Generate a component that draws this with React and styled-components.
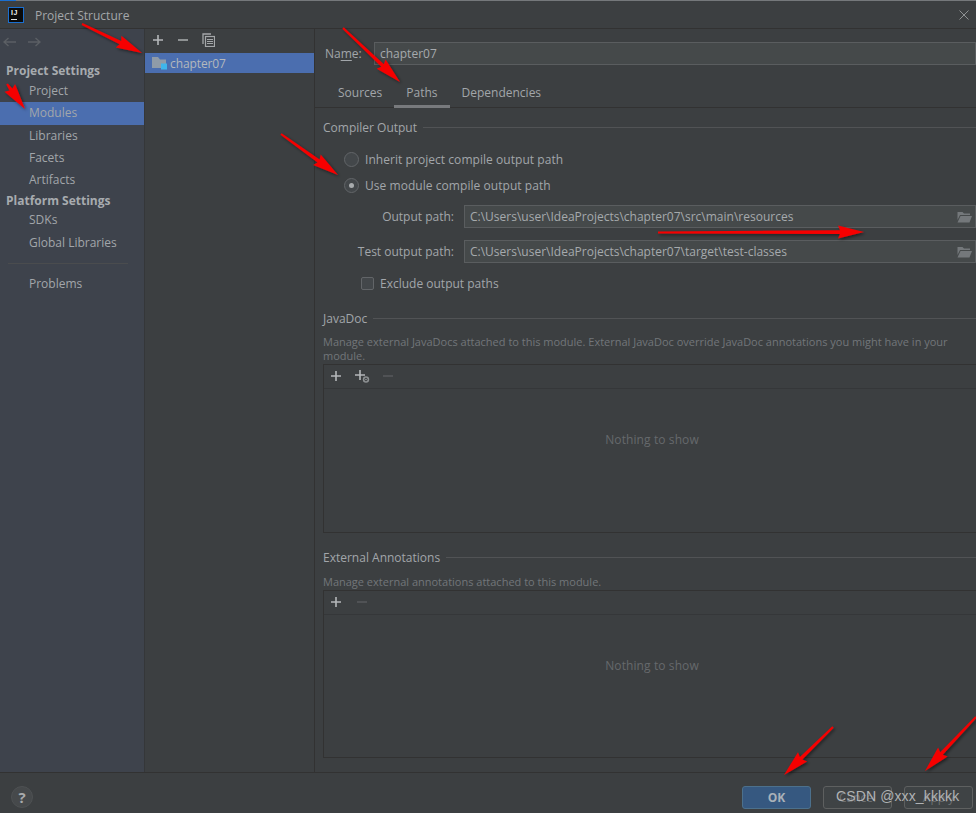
import React from 'react';
import styled, { createGlobalStyle } from 'styled-components';

const GlobalStyle = createGlobalStyle`
  html, body {
    margin: 0;
    padding: 0;
    background: #3c3f41;
  }
  * {
    box-sizing: border-box;
  }
`;

const Dialog = styled.div`
  position: relative;
  width: 976px;
  height: 813px;
  display: flex;
  flex-direction: column;
  overflow: hidden;
  background: #3c3f41;
  color: #a9adb0;
  font-family: "Open Sans", "Noto Sans", sans-serif;
  font-size: 12px;
`;

const TitleBar = styled.div`
  height: 29px;
  flex: none;
  display: flex;
  align-items: center;
  padding: 2px 0 0 8px;
  border-bottom: 1px solid #323232;
  background: linear-gradient(90deg, #1a6fd0 16px, #75787b 16px) top / 100% 1px no-repeat;
`;

const AppLogo = styled.div`
  width: 16px;
  height: 16px;
  margin-right: 11px;
  padding: 1px 0 0 2px;
  display: flex;
  flex-direction: column;
  background: #0a0a0a;
  border: 1px solid #1a6fd0;
  color: #f0f0f0;
  font-family: "Liberation Sans", Arial, sans-serif;
  font-size: 7px;
  font-weight: 700;
  line-height: 8px;
  letter-spacing: 0.5px;
  &::after {
    content: '';
    width: 6px;
    height: 1px;
    margin-top: 2px;
    background: #e0e0e0;
  }
`;

const Title = styled.div`
  flex: 1;
  font-size: 12px;
  color: #a4a7aa;
`;

const CloseButton = styled.svg`
  width: 10px;
  height: 10px;
  margin-right: 7px;
`;

const Body = styled.div`
  flex: 1;
  min-height: 0;
  display: flex;
`;

const Sidebar = styled.div`
  width: 145px;
  flex: none;
  background: #3e434c;
  border-right: 1px solid #353739;
  display: flex;
  flex-direction: column;
`;

const NavArrows = styled.div`
  height: 32px;
  display: flex;
  align-items: flex-start;
  gap: 10px;
  padding: 8px 0 0 3px;
`;

const NavHeading = styled.div`
  height: ${({ $height }) => $height || 19}px;
  padding-top: 2px;
  padding-left: 6px;
  line-height: 16px;
  font-weight: 700;
  color: #a7abaf;
`;

const NavItem = styled.div`
  height: 22.3px;
  padding-left: 29px;
  line-height: 22px;
  color: #a2a6aa;
  background: ${({ $active }) => ($active ? '#4b6eaf' : 'transparent')};
`;

const NavDivider = styled.div`
  height: 1px;
  margin: 9px 16px 9px 8px;
  background: #4a4c4e;
`;

const ModuleList = styled.div`
  width: 170px;
  flex: none;
  border-right: 1px solid #323232;
  background: #3c3f41;
`;

const ListToolbar = styled.div`
  height: 24px;
  display: flex;
  align-items: center;
  gap: ${({ $gap }) => $gap || 13}px;
  padding-left: ${({ $left }) => $left || 7}px;
  padding-bottom: 2px;
`;

const ListRow = styled.div`
  height: 20px;
  display: flex;
  align-items: center;
  gap: 3px;
  padding-left: 7px;
  background: #4b6eaf;
  color: #b4b8bc;
  letter-spacing: -0.1px;
`;

const Main = styled.div`
  flex: 1;
  min-width: 0;
  display: flex;
  flex-direction: column;
  padding-top: 13px;
`;

const NameRow = styled.div`
  height: 23px;
  display: flex;
  align-items: center;
  padding-left: 10px;
`;

const NameLabel = styled.label`
  width: 49px;
  flex: none;
  color: #a2a6aa;
  u {
    text-underline-offset: 2px;
  }
`;

const TextField = styled.div`
  flex: 1;
  min-width: 0;
  height: 23px;
  display: flex;
  align-items: center;
  justify-content: space-between;
  padding: 0 3px 0 5px;
  background: #45494a;
  border: 1px solid #5a5d5f;
  color: #a6aaad;
`;

const Tabs = styled.div`
  height: 43px;
  flex: none;
  padding: 18px 0 0 11px;
  display: flex;
  border-bottom: 1px solid #323232;
`;

const Tab = styled.div`
  height: 25px;
  padding: 0 12px;
  line-height: 19px;
  color: #a2a6aa;
  border-bottom: 3px solid ${({ $active }) => ($active ? '#787a7d' : 'transparent')};
`;

const Content = styled.div`
  flex: 1;
  min-height: 0;
  padding: 10px 0 0 8px;
  display: flex;
  flex-direction: column;
`;

const SectionTitle = styled.div`
  height: 18px;
  flex: none;
  display: flex;
  align-items: center;
  gap: 6px;
  color: #a2a6aa;
  margin-top: ${({ $top }) => $top || 0}px;
  &::after {
    content: '';
    flex: 1;
    height: 1px;
    background: #515355;
  }
`;

const OptionRow = styled.div`
  height: 26px;
  flex: none;
  display: flex;
  align-items: center;
  gap: 6px;
  margin-top: ${({ $top }) => $top || 0}px;
  padding-left: 21px;
  color: #a2a6aa;
  letter-spacing: 0.05px;
`;

const Radio = styled.span`
  width: 15px;
  height: 15px;
  flex: none;
  display: flex;
  align-items: center;
  justify-content: center;
  border-radius: 50%;
  border: 1px solid #626568;
  background: #43474a;
  &::after {
    content: '';
    width: 5px;
    height: 5px;
    border-radius: 50%;
    background: ${({ $checked }) => ($checked ? '#a8abad' : 'transparent')};
  }
`;

const PathRow = styled.div`
  height: 23px;
  flex: none;
  display: flex;
  align-items: center;
  margin-top: ${({ $top }) => $top || 0}px;
`;

const PathLabel = styled.div`
  width: 141px;
  flex: none;
  padding-right: 10px;
  text-align: right;
  color: #a2a6aa;
`;

const CheckRow = styled.div`
  height: 20px;
  flex: none;
  display: flex;
  align-items: center;
  gap: 6px;
  margin-top: 10px;
  padding-left: 38px;
  color: #a2a6aa;
`;

const Checkbox = styled.span`
  width: 13px;
  height: 13px;
  flex: none;
  border-radius: 2px;
  border: 1px solid #626568;
  background: #43474a;
`;

const Hint = styled.div`
  flex: none;
  font-size: 11px;
  line-height: 14px;
  color: #72767a;
  margin-top: ${({ $top }) => $top || 0}px;
  padding-right: 20px;
`;

const TableBox = styled.div`
  flex: none;
  height: ${({ $height }) => $height}px;
  margin-top: 1px;
  display: flex;
  flex-direction: column;
  border: 1px solid #323232;
  border-right: none;
`;

const BoxToolbar = styled(ListToolbar)`
  flex: none;
  border-bottom: 1px solid #353739;
`;

const EmptyText = styled.div`
  flex: 1;
  display: flex;
  align-items: center;
  justify-content: center;
  padding: 0 0 42px 4px;
  color: #66696c;
  letter-spacing: 0.1px;
`;

const Footer = styled.div`
  height: 41px;
  flex: none;
  display: flex;
  align-items: center;
  justify-content: space-between;
  padding: 8px 3px 0 11px;
  border-top: 1px solid #323232;
`;

const HelpButton = styled.div`
  width: 22px;
  height: 22px;
  border-radius: 50%;
  border: 1px solid #4e5153;
  background: #46494b;
  display: flex;
  align-items: center;
  justify-content: center;
  font-weight: 700;
  font-size: 15px;
  color: #a9abad;
`;

const Buttons = styled.div`
  display: flex;
  gap: 12px;
`;

const Button = styled.div`
  width: 69px;
  height: 23px;
  display: flex;
  align-items: center;
  justify-content: center;
  border-radius: 3px;
  font-size: 12px;
  background: ${({ $primary }) => ($primary ? '#365880' : '#3f4345')};
  border: 1px solid ${({ $primary }) => ($primary ? '#4c708c' : '#5e6060')};
  font-weight: ${({ $primary }) => ($primary ? 700 : 400)};
  color: ${({ $primary }) => ($primary ? '#a9b1b9' : '#6d7072')};
`;

const Watermark = styled.div`
  position: absolute;
  left: 836px;
  top: 788px;
  font-family: "Liberation Sans", Arial, sans-serif;
  font-size: 14px;
  line-height: 17px;
  letter-spacing: 0.12px;
  color: #b0b2b4;
`;

const ArrowLayer = styled.svg`
  position: absolute;
  left: 0;
  top: 0;
  width: 976px;
  height: 813px;
  pointer-events: none;
  overflow: visible;
`;

// red annotations: tail x/y, tip x/y
const arrows = [
  [82, 24, 142, 53],
  [7, 84, 25, 109],
  [343, 28, 400, 82],
  [281, 134, 338, 175],
  [658, 232.5, 864, 232],
  [833, 727, 784, 775],
  [976, 717, 925, 771],
];

const arrowPoints = ([x1, y1, x2, y2]) => {
  const len = Math.hypot(x2 - x1, y2 - y1);
  const ux = (x2 - x1) / len;
  const uy = (y2 - y1) / len;
  const nx = -uy;
  const ny = ux;
  const headLen = 24;
  const bx = x2 - ux * headLen;
  const by = y2 - uy * headLen;
  const pts = [
    [x1 + nx * 1, y1 + ny * 1],
    [bx + nx * 1.8, by + ny * 1.8],
    [bx + nx * 6.5 - ux * 2, by + ny * 6.5 - uy * 2],
    [x2, y2],
    [bx - nx * 6.5 - ux * 2, by - ny * 6.5 - uy * 2],
    [bx - nx * 1.8, by - ny * 1.8],
    [x1 - nx * 1, y1 - ny * 1],
  ];
  return pts.map((p) => p.map((v) => v.toFixed(1)).join(',')).join(' ');
};

const Plus = ({ color = '#b4b7b9' }) => (
  <svg width="12" height="12" viewBox="0 0 12 12">
    <path d="M6 1v10M1 6h10" stroke={color} strokeWidth="1.6" fill="none" />
  </svg>
);

const PlusBadge = () => (
  <svg width="16" height="14" viewBox="0 0 16 14">
    <path d="M6 1v10M1 6h10" stroke="#b4b7b9" strokeWidth="1.6" fill="none" />
    <circle cx="12" cy="10.5" r="3.2" fill="#8d9092" />
    <circle cx="12" cy="10.5" r="1.3" fill="none" stroke="#3c3f41" />
  </svg>
);

const Minus = ({ color = '#a4a7a9' }) => (
  <svg width="12" height="12" viewBox="0 0 12 12">
    <path d="M1 6h10" stroke={color} strokeWidth="1.6" fill="none" />
  </svg>
);

const CopyIcon = () => (
  <svg width="13" height="14" viewBox="0 0 13 14" fill="none" stroke="#a4a7a9">
    <path d="M1 11V1h8" strokeWidth="1.3" />
    <rect x="3.5" y="3.5" width="9" height="10" strokeWidth="1.2" />
    <path d="M5 6.5h6M5 8.5h6M5 10.5h6" strokeWidth="1" />
  </svg>
);

const FolderIcon = () => (
  <svg width="15" height="12" viewBox="0 0 15 12">
    <path d="M0.5 1h5l1.5 1.5h6V4H3L0.5 9z" fill="#74787b" />
    <path d="M3.5 5H15l-2.5 6.5H0.5z" fill="#74787b" />
  </svg>
);

const ModuleIcon = () => (
  <svg width="15" height="14" viewBox="0 0 15 14">
    <path d="M0 1h6l2 2.5h6V12H0z" fill="#8f9ba8" />
    <rect x="9" y="7.5" width="6" height="6" fill="#3eb5ec" />
  </svg>
);

const NavArrow = ({ flip }) => (
  <svg width="14" height="10" viewBox="0 0 14 10" fill="none" stroke="#5b5f64" strokeWidth="1.4">
    {flip ? <path d="M1 5h12M8.5 1l4.5 4-4.5 4" /> : <path d="M13 5H1M5.5 1L1 5l4.5 4" />}
  </svg>
);

const App = () => (
  <Dialog>
    <GlobalStyle />
    <TitleBar>
      <AppLogo>IJ</AppLogo>
      <Title>Project Structure</Title>
      <CloseButton viewBox="0 0 10 10">
        <path d="M0.5 0.5l9 9M9.5 0.5l-9 9" stroke="#8f9294" fill="none" />
      </CloseButton>
    </TitleBar>
    <Body>
      <Sidebar>
        <NavArrows>
          <NavArrow />
          <NavArrow flip />
        </NavArrows>
        <NavHeading>Project Settings</NavHeading>
        <NavItem>Project</NavItem>
        <NavItem $active>Modules</NavItem>
        <NavItem>Libraries</NavItem>
        <NavItem>Facets</NavItem>
        <NavItem>Artifacts</NavItem>
        <NavHeading $height={18}>Platform Settings</NavHeading>
        <NavItem>SDKs</NavItem>
        <NavItem>Global Libraries</NavItem>
        <NavDivider />
        <NavItem>Problems</NavItem>
      </Sidebar>
      <ModuleList>
        <ListToolbar>
          <Plus />
          <Minus />
          <CopyIcon />
        </ListToolbar>
        <ListRow>
          <ModuleIcon />
          chapter07
        </ListRow>
      </ModuleList>
      <Main>
        <NameRow>
          <NameLabel>
            Na<u>m</u>e:
          </NameLabel>
          <TextField>chapter07</TextField>
        </NameRow>
        <Tabs>
          <Tab>Sources</Tab>
          <Tab $active>Paths</Tab>
          <Tab>Dependencies</Tab>
        </Tabs>
        <Content>
          <SectionTitle>Compiler Output</SectionTitle>
          <OptionRow $top={10}>
            <Radio />
            Inherit project compile output path
          </OptionRow>
          <OptionRow>
            <Radio $checked />
            Use module compile output path
          </OptionRow>
          <PathRow $top={7}>
            <PathLabel>Output path:</PathLabel>
            <TextField>
              C:\Users\user\IdeaProjects\chapter07\src\main\resources
              <FolderIcon />
            </TextField>
          </PathRow>
          <PathRow $top={12}>
            <PathLabel>Test output path:</PathLabel>
            <TextField>
              C:\Users\user\IdeaProjects\chapter07\target\test-classes
              <FolderIcon />
            </TextField>
          </PathRow>
          <CheckRow>
            <Checkbox />
            Exclude output paths
          </CheckRow>
          <SectionTitle $top={16}>JavaDoc</SectionTitle>
          <Hint $top={8}>
            Manage external JavaDocs attached to this module. External JavaDoc override JavaDoc annotations you might have in your module.
          </Hint>
          <TableBox $height={169}>
            <BoxToolbar $left={6} $gap={12}>
              <Plus />
              <PlusBadge />
              <Minus color="#55585a" />
            </BoxToolbar>
            <EmptyText>Nothing to show</EmptyText>
          </TableBox>
          <SectionTitle $top={15}>External Annotations</SectionTitle>
          <Hint $top={9}>Manage external annotations attached to this module.</Hint>
          <TableBox $height={168}>
            <BoxToolbar $left={6} $gap={14}>
              <Plus />
              <Minus color="#55585a" />
            </BoxToolbar>
            <EmptyText>Nothing to show</EmptyText>
          </TableBox>
        </Content>
      </Main>
    </Body>
    <Footer>
      <HelpButton>?</HelpButton>
      <Buttons>
        <Button $primary>OK</Button>
        <Button>Cancel</Button>
        <Button>Apply</Button>
      </Buttons>
    </Footer>
    <ArrowLayer viewBox="0 0 976 813">
      <defs>
        <filter id="arrowShadow" x="-20%" y="-20%" width="140%" height="140%">
          <feDropShadow dx="1.5" dy="1.5" stdDeviation="1.5" floodColor="#000" floodOpacity="0.5" />
        </filter>
      </defs>
      {arrows.map((a) => (
        <polygon key={a.join('-')} points={arrowPoints(a)} fill="#f60000" filter="url(#arrowShadow)" />
      ))}
    </ArrowLayer>
    <Watermark>CSDN @xxx_kkkkk</Watermark>
  </Dialog>
);

export default App;
